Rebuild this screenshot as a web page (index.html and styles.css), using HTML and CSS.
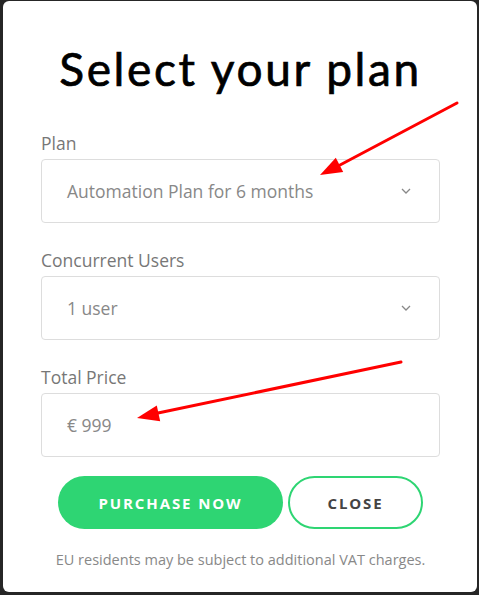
FILE: index.html
```html
<!DOCTYPE html>
<html lang="en">
<head>
    <meta charset="UTF-8">
    <meta name="viewport" content="width=device-width, initial-scale=1.0">
    <title>Select your plan</title>
    <link rel="stylesheet" href="styles.css">
</head>
<body>
    <div class="modal">
        <h1>Select your plan</h1>

        <div class="field">
            <label>Plan</label>
            <div class="select">
                <span>Automation Plan for 6 months</span>
                <svg class="chevron" width="10" height="6" viewBox="0 0 10 6"><path d="M1 1l4 4 4-4" fill="none" stroke="#888" stroke-width="1.3"/></svg>
            </div>
        </div>

        <div class="field">
            <label>Concurrent Users</label>
            <div class="select">
                <span>1 user</span>
                <svg class="chevron" width="10" height="6" viewBox="0 0 10 6"><path d="M1 1l4 4 4-4" fill="none" stroke="#888" stroke-width="1.3"/></svg>
            </div>
        </div>

        <div class="field">
            <label>Total Price</label>
            <div class="select">
                <span>€ 999</span>
            </div>
        </div>

        <div class="actions">
            <button class="btn btn-primary">Purchase now</button>
            <button class="btn btn-outline">Close</button>
        </div>

        <p class="note">EU residents may be subject to additional VAT charges.</p>
    </div>

    <!-- annotation arrows drawn over the screenshot -->
    <svg class="arrows" width="479" height="595" viewBox="0 0 479 595">
        <line x1="457" y1="103" x2="340" y2="165" stroke="#f00" stroke-width="3" stroke-linecap="round"/>
        <polygon points="320,175 343.2,171.9 335.8,157.7" fill="#f00"/>
        <line x1="401" y1="362" x2="158" y2="413" stroke="#f00" stroke-width="3" stroke-linecap="round"/>
        <polygon points="137,418 160.2,421.2 156.8,405.6" fill="#f00"/>
    </svg>
</body>
</html>
```

FILE: styles.css
```css
body {
    margin: 0;
    background-color: #262626;
    font-family: "Open Sans", Arial, sans-serif;
}
.modal {
    margin: 1px 2px 3px 3px;
    height: 591px;
    box-sizing: border-box;
    background: #fff;
    border-radius: 6px;
    padding: 36px 37px 0 38px;
}
h1 {
    margin: 0 0 30px;
    font-family: Lato, "Open Sans", sans-serif;
    font-weight: 400;
    font-size: 46px;
    line-height: 64px;
    letter-spacing: 2.6px;
    -webkit-text-stroke: 0.7px #000;
    text-align: center;
    color: #000;
}
.field + .field {
    margin-top: 25px;
}
.field label {
    display: block;
    font-size: 17.5px;
    line-height: 24px;
    color: #777;
    margin-bottom: 4px;
}
.select {
    height: 64px;
    box-sizing: border-box;
    border: 1px solid #ddd;
    border-radius: 4px;
    padding: 0 28px 0 25px;
    display: flex;
    align-items: center;
    justify-content: space-between;
    font-size: 17.5px;
    color: #888;
}
.actions {
    display: flex;
    justify-content: center;
    gap: 5px;
    margin-top: 19px;
}
.btn {
    height: 53px;
    border-radius: 27px;
    font-family: "Open Sans", sans-serif;
    font-weight: 700;
    font-size: 15px;
    letter-spacing: 1.9px;
    text-transform: uppercase;
    cursor: pointer;
}
.btn-primary {
    width: 225px;
    background: #2ed573;
    border: none;
    color: #fff;
}
.btn-outline {
    width: 135px;
    background: #fff;
    border: 2px solid #2ed573;
    color: #444;
}
.note {
    margin: 21px 0 0;
    text-align: center;
    font-size: 14.5px;
    line-height: 20px;
    color: #888;
}
.arrows {
    position: absolute;
    left: 0;
    top: 0;
    pointer-events: none;
}
```
